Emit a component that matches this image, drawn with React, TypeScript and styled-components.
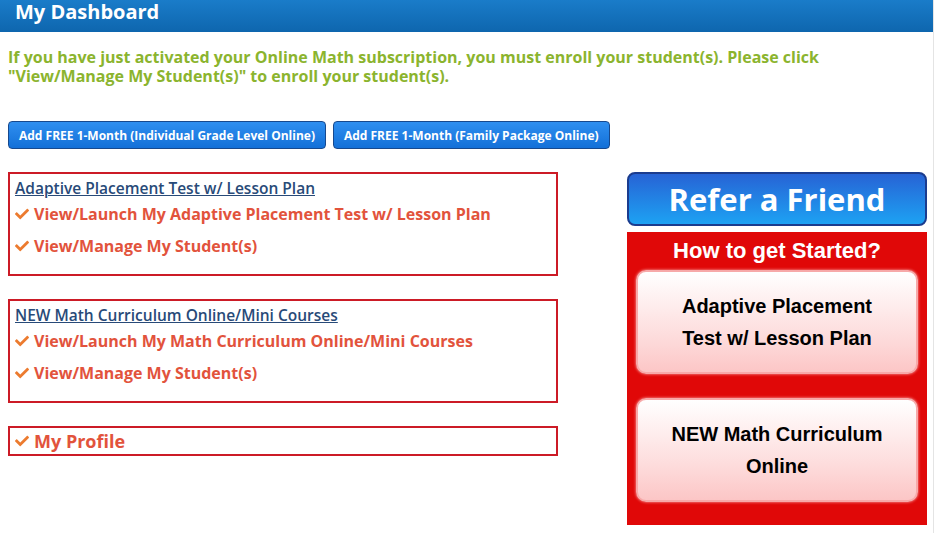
import styled, { createGlobalStyle } from 'styled-components';
import { FaCheck } from 'react-icons/fa';

const GlobalStyle = createGlobalStyle`
  body {
    margin: 0;
    background: #fff;
    font-family: "Open Sans", "Liberation Sans", sans-serif;
  }
`;

const Page = styled.div`
  width: 934px;
  min-height: 533px;
  border-right: 1px solid #e4e4e4;
  box-sizing: border-box;
`;

const Header = styled.div`
  height: 32px;
  background: linear-gradient(#1a7cc9, #0e66ae);
  color: #fff;
  font-size: 20px;
  font-weight: 700;
  line-height: 24px;
  padding-left: 15px;
`;

const Content = styled.div`
  padding: 16px 6px 0 8px;
`;

const Notice = styled.p`
  margin: 0;
  color: #8bb42e;
  font-size: 16px;
  font-weight: 700;
  line-height: 19px;
`;

const ButtonRow = styled.div`
  display: flex;
  gap: 7px;
  margin-top: 35px;
`;

const AddButton = styled.button`
  height: 28px;
  padding: 0 10px;
  border: 1px solid #17498e;
  border-radius: 4px;
  background: linear-gradient(#2f8ff0, #1370d8);
  color: #fff;
  font-family: "Open Sans", sans-serif;
  font-size: 12px;
  font-weight: 700;
  cursor: pointer;
`;

const Main = styled.div`
  display: flex;
  justify-content: space-between;
  margin-top: 23px;
`;

const LeftCol = styled.div`
  width: 550px;
  display: flex;
  flex-direction: column;
  gap: 23px;
`;

const Box = styled.div<{ $compact?: boolean }>`
  box-sizing: border-box;
  border: 2px solid #cc1b26;
  height: ${(p) => (p.$compact ? '30px' : '104px')};
  padding: ${(p) => (p.$compact ? '0 5px' : '4px 5px 0')};
  display: flex;
  flex-direction: column;
  justify-content: ${(p) => (p.$compact ? 'center' : 'flex-start')};
`;

const BoxTitle = styled.a`
  color: #284a78;
  font-size: 15.5px;
  font-weight: 600;
  line-height: 20px;
  text-decoration: underline;
  align-self: flex-start;
`;

const Item = styled.a<{ $big?: boolean }>`
  display: flex;
  align-items: center;
  gap: 5px;
  color: #e2533c;
  font-size: ${(p) => (p.$big ? '18px' : '16px')};
  font-weight: 700;
  line-height: ${(p) => (p.$big ? '26px' : '32px')};
  height: ${(p) => (p.$big ? '26px' : '32px')};
  text-decoration: none;

  svg {
    color: #ec7b2f;
    font-size: 14px;
    flex-shrink: 0;
  }
`;

const RightCol = styled.div`
  width: 300px;
  display: flex;
  flex-direction: column;
  gap: 6px;
`;

const ReferButton = styled.button`
  height: 54px;
  border: 2px solid #1b3c8e;
  border-radius: 8px;
  background: linear-gradient(#2763d5, #1da2f3);
  color: #fff;
  font-family: "Open Sans", sans-serif;
  font-size: 31px;
  font-weight: 700;
  cursor: pointer;
`;

const StartPanel = styled.div`
  background: #e00808;
  padding: 4px 9px 23px;
  display: flex;
  flex-direction: column;
  gap: 24px;
`;

const PanelTitle = styled.div`
  color: #fff;
  font-family: "Liberation Sans", Arial, sans-serif;
  font-size: 22px;
  font-weight: 700;
  text-align: center;
  line-height: 30px;
  margin-bottom: -20px;
`;

const StartCard = styled.a`
  height: 104px;
  box-sizing: border-box;
  border-radius: 10px;
  border: 2px solid #f7a9a9;
  background: linear-gradient(#fff, #fdd9d9 70%, #fcc6c6);
  box-shadow: 0 0 3px rgba(255, 200, 200, 0.9);
  display: flex;
  align-items: center;
  justify-content: center;
  text-align: center;
  color: #000;
  font-family: "Liberation Sans", Arial, sans-serif;
  font-size: 20px;
  font-weight: 700;
  line-height: 32px;
  text-decoration: none;
`;

const studentsLink = 'View/Manage My Student(s)';

export default function App() {
  return (
    <Page>
      <GlobalStyle />
      <Header>My Dashboard</Header>
      <Content>
        <Notice>
          If you have just activated your Online Math subscription, you must enroll your student(s). Please click
          <br />
          "View/Manage My Student(s)" to enroll your student(s).
        </Notice>
        <ButtonRow>
          <AddButton>Add FREE 1-Month (Individual Grade Level Online)</AddButton>
          <AddButton>Add FREE 1-Month (Family Package Online)</AddButton>
        </ButtonRow>
        <Main>
          <LeftCol>
            <Box>
              <BoxTitle href="#">Adaptive Placement Test w/ Lesson Plan</BoxTitle>
              <Item href="#">
                <FaCheck />
                View/Launch My Adaptive Placement Test w/ Lesson Plan
              </Item>
              <Item href="#">
                <FaCheck />
                {studentsLink}
              </Item>
            </Box>
            <Box>
              <BoxTitle href="#">NEW Math Curriculum Online/Mini Courses</BoxTitle>
              <Item href="#">
                <FaCheck />
                View/Launch My Math Curriculum Online/Mini Courses
              </Item>
              <Item href="#">
                <FaCheck />
                {studentsLink}
              </Item>
            </Box>
            <Box $compact>
              <Item href="#" $big>
                <FaCheck />
                My Profile
              </Item>
            </Box>
          </LeftCol>
          <RightCol>
            <ReferButton>Refer a Friend</ReferButton>
            <StartPanel>
              <PanelTitle>How to get Started?</PanelTitle>
              <StartCard href="#">
                Adaptive Placement
                <br />
                Test w/ Lesson Plan
              </StartCard>
              <StartCard href="#">
                NEW Math Curriculum
                <br />
                Online
              </StartCard>
            </StartPanel>
          </RightCol>
        </Main>
      </Content>
    </Page>
  );
}
